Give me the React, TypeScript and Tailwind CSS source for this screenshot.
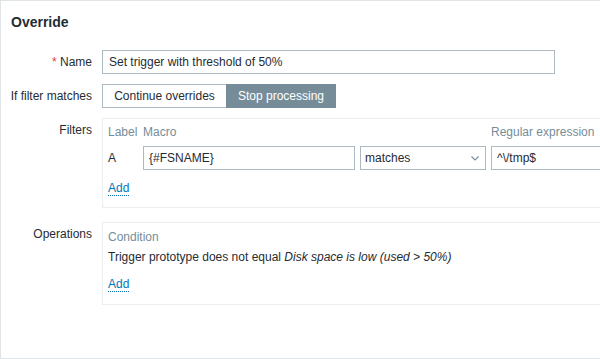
import React from "react";

const font = { fontFamily: '"Liberation Sans", Arial, sans-serif' };

function Label({ children }: { children: React.ReactNode }) {
  return (
    <div className="w-[91px] shrink-0 text-right leading-[24px] text-[12px] text-[#1f2c33]">
      {children}
    </div>
  );
}

function AddLink() {
  return (
    <div className="flex">
      <span className="inline-block leading-[14px] text-[12px] text-[#0275b8] border-b border-dotted border-[#0275b8]">
        Add
      </span>
    </div>
  );
}

export default function App() {
  return (
    <div className="w-[600px] h-[359px] overflow-hidden bg-white" style={font}>
      <div className="w-[640px] h-[359px] border border-[#dfe4e7] bg-white text-[#1f2c33]">
        <h1 className="pl-[10px] pt-[12px] text-[14px] leading-[18px] font-bold text-[#1f2c33]">
          Override
        </h1>

        {/* Name */}
        <div className="mt-[19px] flex gap-[10px]">
          <Label>
            <span className="text-[#e33734]">*</span> Name
          </Label>
          <div className="w-[453px] h-[24px] border border-[#acbbc2] bg-white px-[6px] text-[12px] leading-[22px]">
            Set trigger with threshold of 50%
          </div>
        </div>

        {/* If filter matches */}
        <div className="mt-[10px] flex gap-[10px]">
          <Label>If filter matches</Label>
          <div className="flex h-[24px] text-[12px]">
            <div className="w-[124px] border border-[#acbbc2] border-r-0 bg-white leading-[22px] text-center text-[#1f2c33]">
              Continue overrides
            </div>
            <div className="w-[110px] border border-[#768d99] bg-[#768d99] leading-[22px] text-center text-white">
              Stop processing
            </div>
          </div>
        </div>

        {/* Filters */}
        <div className="mt-[10px] flex gap-[10px]">
          <Label>Filters</Label>
          <div className="w-[600px] h-[90px] border border-[#ebeef0] px-[5px] pt-[5px]">
            <div className="grid grid-cols-[30px_212px_126px_200px] gap-x-[5px] text-[12px] leading-[16px] text-[#768d99]">
              <div>Label</div>
              <div>Macro</div>
              <div></div>
              <div>Regular expression</div>
            </div>
            <div className="mt-[6px] grid grid-cols-[30px_212px_126px_200px] gap-x-[5px] text-[12px]">
              <div className="leading-[24px]">A</div>
              <div className="h-[24px] border border-[#acbbc2] px-[5px] leading-[22px]">{"{#FSNAME}"}</div>
              <div className="h-[24px] border border-[#acbbc2] pl-[4px] pr-[6px] leading-[22px] flex items-center justify-between">
                <span>matches</span>
                <svg width="8" height="5" viewBox="0 0 8 5" className="mt-[1px]">
                  <path d="M0.5 0.5 L4 4 L7.5 0.5" fill="none" stroke="#768d99" strokeWidth="1.1" />
                </svg>
              </div>
              <div className="h-[24px] border border-[#acbbc2] px-[5px] leading-[22px]">^\/tmp$</div>
            </div>
            <div className="mt-[11px]">
              <AddLink />
            </div>
          </div>
        </div>

        {/* Operations */}
        <div className="mt-[14px] flex gap-[10px]">
          <Label>Operations</Label>
          <div className="w-[600px] h-[83px] border border-[#ebeef0] px-[5px] pt-[6px] text-[12px] leading-[16px]">
            <div className="text-[#768d99]">Condition</div>
            <div className="mt-[4px] text-[#1f2c33]">
              Trigger prototype does not equal <i>Disk space is low (used &gt; 50%)</i>
            </div>
            <div className="mt-[12px]">
              <AddLink />
            </div>
          </div>
        </div>
      </div>
    </div>
  );
}
